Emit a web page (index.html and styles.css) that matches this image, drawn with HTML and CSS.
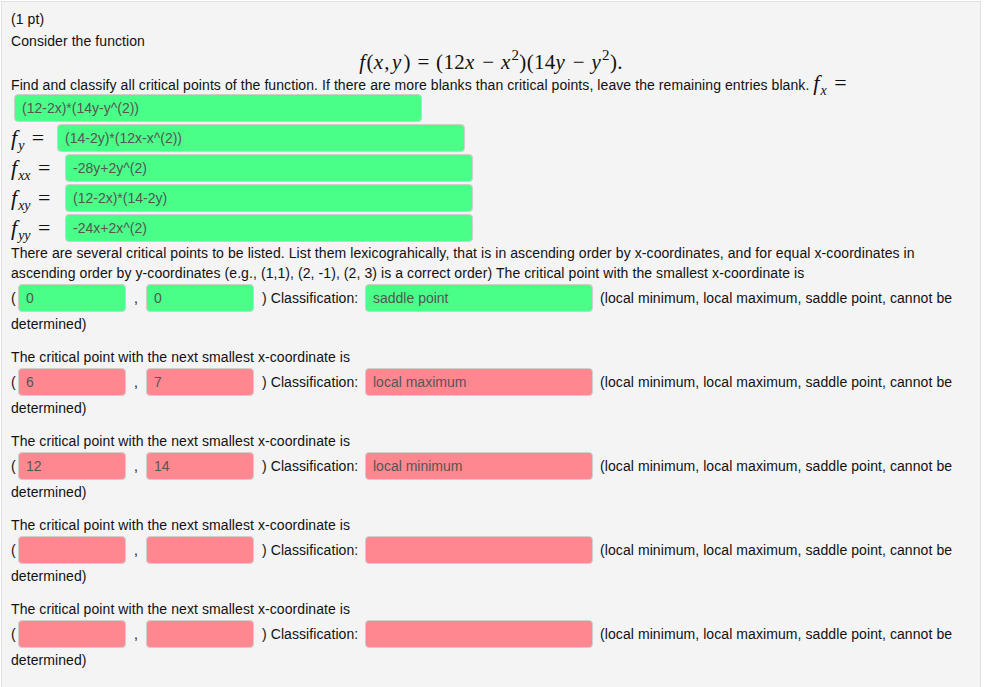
FILE: index.html
```html
<!DOCTYPE html>
<html>
<head>
<meta charset="utf-8">
<link rel="stylesheet" href="styles.css">
</head>
<body>
<div class="problem">
  <div class="l22">(1 pt)</div>
  <div class="l22">Consider the function</div>
  <div class="display"><span class="math"><i>f</i>(<i>x</i>,&#8202;<i class="sp">y</i>) <span class="op">=</span> (12<i>x</i> <span class="op">−</span> <i>x</i><sup>2</sup>)(14<i>y</i> <span class="op">−</span> <i>y</i><sup>2</sup>).</span></div>
  <div class="line">Find and classify all critical points of the function. If there are more blanks than critical points, leave the remaining entries blank. <span class="mlabel"><i>f</i><sub>x</sub> <span class="op">=</span></span></div>
  <div class="drow"><span class="ans ok w-fx">(12-2x)*(14y-y^(2))</span></div>
  <div class="drow"><span class="dlab w46"><i>f</i><sub>y</sub> <span class="op">=</span></span><span class="ans ok wd">(14-2y)*(12x-x^(2))</span></div>
  <div class="drow"><span class="dlab w54"><i>f</i><sub>xx</sub> <span class="op">=</span></span><span class="ans ok wd">-28y+2y^(2)</span></div>
  <div class="drow"><span class="dlab w54"><i>f</i><sub>xy</sub> <span class="op">=</span></span><span class="ans ok wd">(12-2x)*(14-2y)</span></div>
  <div class="drow"><span class="dlab w54"><i>f</i><sub>yy</sub> <span class="op">=</span></span><span class="ans ok wd">-24x+2x^(2)</span></div>
  <div class="line">There are several critical points to be listed. List them lexicograhically, that is in ascending order by x-coordinates, and for equal x-coordinates in</div>
  <div class="line">ascending order by y-coordinates (e.g., (1,1), (2, -1), (2, 3) is a correct order) The critical point with the smallest x-coordinate is</div>

  <div class="point">
    <div class="prow"><span class="paren">(</span><span class="ans ok wc">0</span><span class="comma">,</span><span class="ans ok wc">0</span><span class="cls">) Classification:</span><span class="ans ok wk">saddle point</span><span class="opts">(local minimum, local maximum, saddle point, cannot be</span></div>
    <div class="line">determined)</div>
  </div>

  <div class="point gap">
    <div class="line">The critical point with the next smallest x-coordinate is</div>
    <div class="prow"><span class="paren">(</span><span class="ans bad wc">6</span><span class="comma">,</span><span class="ans bad wc">7</span><span class="cls">) Classification:</span><span class="ans bad wk">local maximum</span><span class="opts">(local minimum, local maximum, saddle point, cannot be</span></div>
    <div class="line">determined)</div>
  </div>

  <div class="point gap">
    <div class="line">The critical point with the next smallest x-coordinate is</div>
    <div class="prow"><span class="paren">(</span><span class="ans bad wc">12</span><span class="comma">,</span><span class="ans bad wc">14</span><span class="cls">) Classification:</span><span class="ans bad wk">local minimum</span><span class="opts">(local minimum, local maximum, saddle point, cannot be</span></div>
    <div class="line">determined)</div>
  </div>

  <div class="point gap">
    <div class="line">The critical point with the next smallest x-coordinate is</div>
    <div class="prow"><span class="paren">(</span><span class="ans bad wc"></span><span class="comma">,</span><span class="ans bad wc"></span><span class="cls">) Classification:</span><span class="ans bad wk"></span><span class="opts">(local minimum, local maximum, saddle point, cannot be</span></div>
    <div class="line">determined)</div>
  </div>

  <div class="point gap">
    <div class="line">The critical point with the next smallest x-coordinate is</div>
    <div class="prow"><span class="paren">(</span><span class="ans bad wc"></span><span class="comma">,</span><span class="ans bad wc"></span><span class="cls">) Classification:</span><span class="ans bad wk"></span><span class="opts">(local minimum, local maximum, saddle point, cannot be</span></div>
    <div class="line">determined)</div>
  </div>
</div>
</body>
</html>
```
FILE: styles.css
```css
html, body {
  margin: 0;
  padding: 0;
  background: #ffffff;
}
body {
  font-family: "Liberation Sans", Arial, sans-serif;
  font-size: 14px;
  letter-spacing: 0.08px;
  color: #111;
  overflow: hidden;
}
.problem {
  margin: 1px 0 0 1px;
  width: 980px;
  box-sizing: border-box;
  min-height: 720px;
  background: #f4f4f4;
  border: 1px solid #e0e0e0;
  border-bottom: none;
  padding: 6px 0 0 9px;
}
.l22 {
  height: 22px;
  line-height: 22px;
}
.line {
  height: 20px;
  line-height: 20px;
  white-space: nowrap;
}
.display {
  height: 21px;
  line-height: 21px;
  text-align: center;
  padding-right: 9px;
}
.math {
  font-family: "Liberation Serif", "Times New Roman", serif;
  font-size: 21px;
  letter-spacing: 0.3px;
  color: #111;
  white-space: nowrap;
}
.math i, .mlabel i, .dlab i {
  font-style: italic;
}
.math i { padding-right: 1px; }
.math .sp { margin-right: 1px; }
.math sup {
  font-size: 15px;
  line-height: 0;
  vertical-align: 9px;
}
.op {
  padding: 0 1px;
}
.mlabel, .dlab {
  font-family: "Liberation Serif", "Times New Roman", serif;
  font-size: 22px;
  letter-spacing: 0;
  white-space: nowrap;
}
.mlabel .op, .dlab .op {
  padding: 0 2px;
}
.mlabel sub, .dlab sub {
  font-style: italic;
  font-size: 14px;
  line-height: 0;
  vertical-align: -5px;
  padding-left: 1px;
}
.drow {
  height: 30px;
  display: flex;
  align-items: center;
}
.dlab {
  display: inline-block;
  flex: none;
  line-height: 28px;
  height: 28px;
}
.w46 { width: 46px; }
.w54 { width: 54px; }
.ans {
  display: inline-block;
  box-sizing: border-box;
  height: 28px;
  line-height: 26px;
  border: 1px solid #cfcfcf;
  border-radius: 4px;
  padding: 0 7px;
  color: #555;
  font-size: 14px;
  letter-spacing: 0;
  flex: none;
  white-space: nowrap;
  overflow: hidden;
}
.ok { background: #4aff88; }
.bad { background: #ff8890; }
.w-fx { width: 408px; margin-left: 3px; }
.wd { width: 408px; }
.wc { width: 108px; }
.wk { width: 228px; }
.prow {
  display: flex;
  align-items: center;
  height: 31px;
  padding-bottom: 1px;
  box-sizing: border-box;
}
.paren {
  width: 7px;
  flex: none;
}
.comma {
  width: 20px;
  text-align: center;
  flex: none;
}
.cls {
  width: 111px;
  padding-left: 8px;
  box-sizing: border-box;
  flex: none;
  white-space: nowrap;
}
.opts {
  padding-left: 7px;
  white-space: nowrap;
}
.gap {
  margin-top: 13px;
}
```
